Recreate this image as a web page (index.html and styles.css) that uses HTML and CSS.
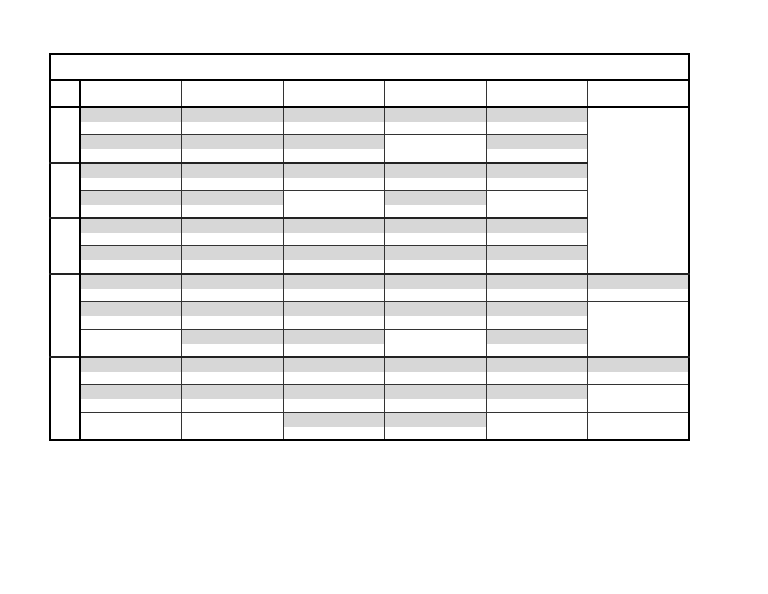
FILE: index.html
```html
<!DOCTYPE html>
<html>
<head>
<meta charset="utf-8">
<link rel="stylesheet" href="styles.css">
</head>
<body>
<div class="page">
<table class="grid">
  <colgroup>
    <col class="col-grp">
    <col class="col"><col class="col"><col class="col"><col class="col"><col class="col"><col class="col">
  </colgroup>
  <tbody>
    <tr class="title-row"><td colspan="7"></td></tr>
    <tr class="head-row"><td class="grp"></td><td></td><td></td><td></td><td></td><td></td><td></td></tr>

    <tr class="row start"><td class="grp" rowspan="2"></td><td><div class="bar"></div></td><td><div class="bar"></div></td><td><div class="bar"></div></td><td><div class="bar"></div></td><td><div class="bar"></div></td><td class="last" rowspan="6"></td></tr>
    <tr class="row"><td><div class="bar"></div></td><td><div class="bar"></div></td><td><div class="bar"></div></td><td></td><td><div class="bar"></div></td></tr>

    <tr class="row start"><td class="grp" rowspan="2"></td><td><div class="bar"></div></td><td><div class="bar"></div></td><td><div class="bar"></div></td><td><div class="bar"></div></td><td><div class="bar"></div></td></tr>
    <tr class="row"><td><div class="bar"></div></td><td><div class="bar"></div></td><td></td><td><div class="bar"></div></td><td></td></tr>

    <tr class="row start"><td class="grp" rowspan="2"></td><td><div class="bar"></div></td><td><div class="bar"></div></td><td><div class="bar"></div></td><td><div class="bar"></div></td><td><div class="bar"></div></td></tr>
    <tr class="row"><td><div class="bar"></div></td><td><div class="bar"></div></td><td><div class="bar"></div></td><td><div class="bar"></div></td><td><div class="bar"></div></td></tr>

    <tr class="row start"><td class="grp" rowspan="3"></td><td><div class="bar"></div></td><td><div class="bar"></div></td><td><div class="bar"></div></td><td><div class="bar"></div></td><td><div class="bar"></div></td><td class="last"><div class="bar"></div></td></tr>
    <tr class="row"><td><div class="bar"></div></td><td><div class="bar"></div></td><td><div class="bar"></div></td><td><div class="bar"></div></td><td><div class="bar"></div></td><td class="last" rowspan="2"></td></tr>
    <tr class="row"><td></td><td><div class="bar"></div></td><td><div class="bar"></div></td><td></td><td><div class="bar"></div></td></tr>

    <tr class="row start"><td class="grp" rowspan="3"></td><td><div class="bar"></div></td><td><div class="bar"></div></td><td><div class="bar"></div></td><td><div class="bar"></div></td><td><div class="bar"></div></td><td class="last"><div class="bar"></div></td></tr>
    <tr class="row"><td><div class="bar"></div></td><td><div class="bar"></div></td><td><div class="bar"></div></td><td><div class="bar"></div></td><td><div class="bar"></div></td><td class="last"></td></tr>
    <tr class="row"><td></td><td></td><td><div class="bar"></div></td><td><div class="bar"></div></td><td></td><td class="last"></td></tr>
  </tbody>
</table>
</div>
</body>
</html>
```

FILE: styles.css
```css
html, body {
  margin: 0;
  padding: 0;
  background: #ffffff;
  font-family: "Liberation Sans", Arial, sans-serif;
}

.page {
  padding: 53px 0 0 49px;
}

.grid {
  border-collapse: collapse;
  table-layout: fixed;
  width: 639px;
  border: 2px solid #000;
}

.col-grp { width: 30px; }
.col { width: 101.5px; }

.grid td {
  padding: 0;
  vertical-align: top;
  border: 1px solid #333;
}

.title-row { height: 26px; }
.title-row td { border-bottom: 2px solid #000; }

.head-row { height: 27px; }
.head-row td { border-bottom: 2px solid #000; }

.row { height: 27.75px; }
.row.start td { border-top: 2px solid #222; }

.grid td.grp {
  border-right: 2px solid #000;
}

.bar {
  height: 14px;
  background: #d7d7d7;
}
```
